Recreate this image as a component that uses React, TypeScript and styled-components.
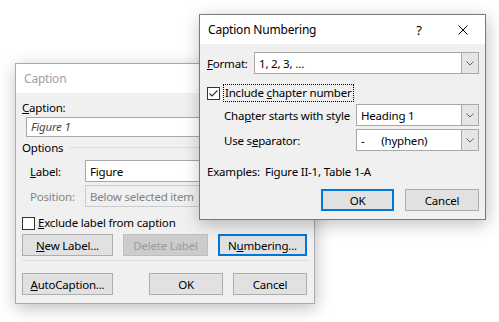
import React from 'react';
import styled, { createGlobalStyle } from 'styled-components';

const GlobalStyle = createGlobalStyle`
  html, body {
    margin: 0;
    padding: 0;
    background: #ffffff;
  }
  body {
    font-family: "Segoe UI", "Noto Sans", "Liberation Sans", sans-serif;
    font-size: 11.5px;
    letter-spacing: -0.2px;
    color: #000000;
  }
`;

const Desktop = styled.div`
  position: relative;
  width: 499px;
  height: 322px;
  overflow: hidden;
  background: #ffffff;
`;

const Window = styled.div<{ $x: number; $y: number; $w: number; $h: number; $active?: boolean }>`
  position: absolute;
  left: ${p => p.$x}px;
  top: ${p => p.$y}px;
  width: ${p => p.$w}px;
  height: ${p => p.$h}px;
  box-sizing: border-box;
  display: flex;
  flex-direction: column;
  background: #f0f0f0;
  border: 1px solid ${p => (p.$active ? '#7a7a7a' : '#aaaaaa')};
  box-shadow: 1px 4px 16px rgba(0, 0, 0, 0.26);
`;

const TitleBar = styled.div<{ $active?: boolean }>`
  height: 29px;
  flex: none;
  display: flex;
  align-items: center;
  padding-left: 8px;
  background: #ffffff;
  color: ${p => (p.$active ? '#000000' : '#a0a0a0')};
  font-size: 12px;
`;

const TitleText = styled.span`
  flex: 1;
`;

const TitleButton = styled.div`
  width: 44px;
  height: 29px;
  display: flex;
  align-items: center;
  justify-content: center;
  font-size: 13px;
`;

const Body = styled.div<{ $pl: number; $pr: number; $pt: number }>`
  flex: 1;
  display: flex;
  flex-direction: column;
  padding: ${p => p.$pt}px ${p => p.$pr}px 0 ${p => p.$pl}px;
`;

const Line = styled.div<{ $mt?: number; $indent?: number; $h?: number }>`
  height: ${p => p.$h ?? 16}px;
  line-height: 16px;
  margin-top: ${p => p.$mt ?? 0}px;
  padding-left: ${p => p.$indent ?? 0}px;
  white-space: nowrap;
`;

const TextBox = styled.div<{ $h?: number; $disabled?: boolean; $italic?: boolean }>`
  box-sizing: border-box;
  height: ${p => p.$h ?? 22}px;
  display: flex;
  align-items: center;
  padding-left: 4px;
  background: ${p => (p.$disabled ? '#f0f0f0' : '#ffffff')};
  border: 1px solid ${p => (p.$disabled ? '#cccccc' : '#a8a8a8')};
  color: ${p => (p.$disabled ? '#838383' : p.$italic ? '#4a4a4a' : '#000000')};
  font-style: ${p => (p.$italic ? 'italic' : 'normal')};
  white-space: nowrap;
  overflow: hidden;
`;

const Select = styled.div`
  box-sizing: border-box;
  height: 22px;
  display: flex;
  align-items: stretch;
  background: #ffffff;
  border: 1px solid #a8a8a8;
  white-space: nowrap;
`;

const SelectValue = styled.div`
  flex: 1;
  display: flex;
  align-items: center;
  padding-left: 4px;
`;

const SelectArrow = styled.div`
  width: 16px;
  display: flex;
  align-items: center;
  justify-content: center;
  background: #e5e5e5;
  border-left: 1px solid #a8a8a8;
`;

const FieldGrid = styled.div<{ $cols: string; $mt?: number; $indent?: number; $gap?: number }>`
  display: grid;
  grid-template-columns: ${p => p.$cols};
  row-gap: ${p => p.$gap ?? 3}px;
  align-items: center;
  margin-top: ${p => p.$mt ?? 0}px;
  padding-left: ${p => p.$indent ?? 0}px;
  white-space: nowrap;
`;

const FieldLabel = styled.span<{ $disabled?: boolean }>`
  color: ${p => (p.$disabled ? '#838383' : '#000000')};
`;

const GroupHeader = styled.div<{ $mt?: number }>`
  display: flex;
  align-items: center;
  height: 16px;
  margin-top: ${p => p.$mt ?? 0}px;
  gap: 6px;
  &::after {
    content: '';
    flex: 1;
    height: 1px;
    background: #dcdcdc;
  }
`;

const CheckRow = styled.div<{ $mt?: number; $h?: number }>`
  display: flex;
  align-items: center;
  height: ${p => p.$h ?? 16}px;
  margin-top: ${p => p.$mt ?? 0}px;
  gap: 3px;
`;

const Box = styled.div`
  box-sizing: border-box;
  width: 13px;
  height: 13px;
  background: #ffffff;
  border: 1px solid #333333;
  display: flex;
  align-items: center;
  justify-content: center;
`;

const CheckLabel = styled.span<{ $focus?: boolean }>`
  box-sizing: border-box;
  height: ${p => (p.$focus ? '18px' : 'auto')};
  line-height: 16px;
  padding: 0 ${p => (p.$focus ? 1 : 0)}px;
  border: ${p => (p.$focus ? '1px dotted #000000' : 'none')};
`;

const ButtonRow = styled.div<{ $mt?: number; $justify?: string; $gap?: number }>`
  display: flex;
  justify-content: ${p => p.$justify ?? 'flex-start'};
  gap: ${p => p.$gap ?? 10}px;
  margin-top: ${p => p.$mt ?? 0}px;
`;

const Button = styled.div<{ $w: number; $default?: boolean; $disabled?: boolean; $ml?: number }>`
  box-sizing: border-box;
  width: ${p => p.$w}px;
  height: 22px;
  margin-left: ${p => p.$ml ?? 0}px;
  display: flex;
  align-items: center;
  justify-content: center;
  background: ${p => (p.$disabled ? '#cccccc' : '#e1e1e1')};
  border: ${p => (p.$default ? '2px solid #0078d7' : `1px solid ${p.$disabled ? '#bfbfbf' : '#adadad'}`)};
  color: ${p => (p.$disabled ? '#9a9a9a' : '#000000')};
  white-space: nowrap;
`;

const Separator = styled.div<{ $mt?: number }>`
  height: 1px;
  background: #dcdcdc;
  margin-top: ${p => p.$mt ?? 0}px;
`;

const ExampleLabel = styled.span`
  display: inline-block;
  width: 58px;
`;

const Chevron = () => (
  <svg width="8" height="5" viewBox="0 0 8 5">
    <path d="M0.5 0.5 L4 4 L7.5 0.5" fill="none" stroke="#606060" strokeWidth="1" />
  </svg>
);

const CheckMark = () => (
  <svg width="11" height="11" viewBox="0 0 11 11">
    <path d="M1.5 5.5 L4 8 L9.5 2.5" fill="none" stroke="#333333" strokeWidth="1.2" />
  </svg>
);

const CloseIcon = () => (
  <svg width="10" height="10" viewBox="0 0 10 10">
    <path d="M0.5 0.5 L9.5 9.5 M9.5 0.5 L0.5 9.5" stroke="#000000" strokeWidth="1" />
  </svg>
);

const CaptionDialog: React.FC = () => (
  <Window $x={15} $y={63} $w={300} $h={241}>
    <TitleBar>
      <TitleText>Caption</TitleText>
    </TitleBar>
    <Body $pl={6} $pr={6} $pt={7}>
      <Line><u>C</u>aption:</Line>
      <Line $mt={1} $indent={4} $h={20}>
        <TextBox $h={20} $italic>Figure 1</TextBox>
      </Line>
      <GroupHeader $mt={2}>Options</GroupHeader>
      <FieldGrid $cols="55px 1fr" $mt={5} $indent={8}>
        <FieldLabel><u>L</u>abel:</FieldLabel>
        <TextBox>Figure</TextBox>
        <FieldLabel $disabled>Position:</FieldLabel>
        <TextBox $disabled>Below selected item</TextBox>
      </FieldGrid>
      <CheckRow $mt={8}>
        <Box />
        <CheckLabel><u>E</u>xclude label from caption</CheckLabel>
      </CheckRow>
      <ButtonRow $mt={3}>
        <Button $w={91}><u>N</u>ew Label...</Button>
        <Button $w={85} $disabled>Delete Label</Button>
        <Button $w={89} $default>N<u>u</u>mbering...</Button>
      </ButtonRow>
      <Separator $mt={4} />
      <ButtonRow $mt={12}>
        <Button $w={91}><u>A</u>utoCaption...</Button>
        <Button $w={74} $ml={26}>OK</Button>
        <Button $w={74}>Cancel</Button>
      </ButtonRow>
    </Body>
  </Window>
);

const CaptionNumberingDialog: React.FC = () => (
  <Window $x={199} $y={14} $w={287} $h={206} $active>
    <TitleBar $active>
      <TitleText>Caption Numbering</TitleText>
      <TitleButton>?</TitleButton>
      <TitleButton><CloseIcon /></TitleButton>
    </TitleBar>
    <Body $pl={7} $pr={6} $pt={8}>
      <FieldGrid $cols="47px 1fr">
        <FieldLabel><u>F</u>ormat:</FieldLabel>
        <Select>
          <SelectValue>1, 2, 3, …</SelectValue>
          <SelectArrow><Chevron /></SelectArrow>
        </Select>
      </FieldGrid>
      <CheckRow $mt={10} $h={18}>
        <Box><CheckMark /></Box>
        <CheckLabel $focus>Include <u>c</u>hapter number</CheckLabel>
      </CheckRow>
      <FieldGrid $cols="132px 1fr" $mt={2} $indent={17}>
        <FieldLabel>Cha<u>p</u>ter starts with style</FieldLabel>
        <Select>
          <SelectValue>Heading 1</SelectValue>
          <SelectArrow><Chevron /></SelectArrow>
        </Select>
        <FieldLabel>Use s<u>e</u>parator:</FieldLabel>
        <Select>
          <SelectValue>-&nbsp;&nbsp;&nbsp;&nbsp;&nbsp;&nbsp;(hyphen)</SelectValue>
          <SelectArrow><Chevron /></SelectArrow>
        </Select>
      </FieldGrid>
      <Line $mt={13}>
        <ExampleLabel>Examples:</ExampleLabel>Figure II-1, Table 1-A
      </Line>
      <ButtonRow $mt={9} $justify="flex-end" $gap={11}>
        <Button $w={73} $default>OK</Button>
        <Button $w={74}>Cancel</Button>
      </ButtonRow>
    </Body>
  </Window>
);

const App: React.FC = () => (
  <Desktop>
    <GlobalStyle />
    <CaptionDialog />
    <CaptionNumberingDialog />
  </Desktop>
);

export default App;
